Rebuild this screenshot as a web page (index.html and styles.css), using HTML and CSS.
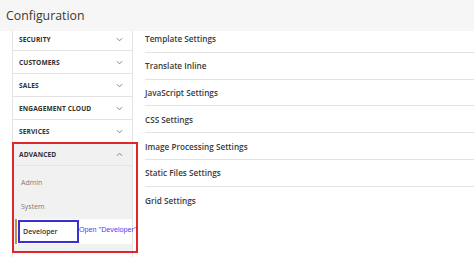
FILE: index.html
```html
<!DOCTYPE html>
<html>
<head>
<meta charset="utf-8">
<link rel="stylesheet" href="styles.css">
</head>
<body>
<header class="page-header"><h1 class="title">Configuration</h1></header>
<div class="main">
  <nav class="sidebar">
    <div class="side-list">
      <div class="side-row"><span>SECURITY</span><svg class="chev" viewBox="0 0 8 5"><path d="M1 1l3 3 3-3" fill="none" stroke="#777" stroke-width="1"/></svg></div>
      <div class="side-row"><span>CUSTOMERS</span><svg class="chev" viewBox="0 0 8 5"><path d="M1 1l3 3 3-3" fill="none" stroke="#777" stroke-width="1"/></svg></div>
      <div class="side-row"><span>SALES</span><svg class="chev" viewBox="0 0 8 5"><path d="M1 1l3 3 3-3" fill="none" stroke="#777" stroke-width="1"/></svg></div>
      <div class="side-row"><span>ENGAGEMENT CLOUD</span><svg class="chev" viewBox="0 0 8 5"><path d="M1 1l3 3 3-3" fill="none" stroke="#777" stroke-width="1"/></svg></div>
      <div class="side-row"><span>SERVICES</span><svg class="chev" viewBox="0 0 8 5"><path d="M1 1l3 3 3-3" fill="none" stroke="#777" stroke-width="1"/></svg></div>
      <div class="group">
        <div class="side-row open"><span>ADVANCED</span><svg class="chev" viewBox="0 0 8 5"><path d="M1 4l3-3 3 3" fill="none" stroke="#777" stroke-width="1"/></svg></div>
        <div class="sub first">Admin</div>
        <div class="sub">System</div>
        <div class="sub active">Developer</div>
      </div>
    </div>
    <div class="note-red"></div>
    <div class="note-blue"></div>
    <div class="note-text">Open "Developer"</div>
  </nav>
  <section class="content">
    <div class="content-list">
      <div class="item">Template Settings</div>
      <div class="item">Translate Inline</div>
      <div class="item">JavaScript Settings</div>
      <div class="item">CSS Settings</div>
      <div class="item">Image Processing Settings</div>
      <div class="item">Static Files Settings</div>
      <div class="item last">Grid Settings</div>
    </div>
  </section>
</div>
</body>
</html>
```
FILE: styles.css
```css
* { box-sizing: border-box; }
html, body { margin: 0; padding: 0; background: #fff; }
body { font-family: "Open Sans", "Liberation Sans", sans-serif; width: 474px; height: 257px; overflow: hidden; }

.page-header { height: 31px; background: #f6f6f6; padding-left: 6px; display: flex; align-items: center; }
.title { margin: 0; font-size: 12.3px; font-weight: 400; color: #41362f; }

.main { display: flex; height: 226px; overflow: hidden; }

.sidebar { position: relative; width: 121px; margin-left: 12px; border-left: 1px solid #e3e3e3; border-right: 1px solid #e3e3e3; }
.side-list { margin-top: -3px; }
.side-row { height: 23px; display: flex; align-items: center; justify-content: space-between; padding: 0 9px 0 6px; border-bottom: 1px solid #e3e3e3; font-size: 6.6px; font-weight: 700; color: #303030; letter-spacing: 0.1px; }
.chev { width: 7px; height: 5px; }
.group { background: #f1f1f1; padding-bottom: 8px; }
.side-row.open { border-bottom: 1px solid #e6e6e6; }
.sub { height: 24.5px; display: flex; align-items: center; padding-left: 8px; font-size: 7px; color: #7b7b7b; }
.sub.first { margin-top: 4px; }
.sub.active { background: #fff; color: #303030; font-weight: 600; border-left: 2px solid #c4904c; margin-left: 2px; padding-left: 6px; height: 25px; }

.note-red { position: absolute; left: -1px; top: 111px; width: 126px; height: 111px; border: 2px solid #e0262a; }
.note-blue { position: absolute; left: 5px; top: 189px; width: 61px; height: 23px; border: 2px solid #3a2fd0; }
.note-text { position: absolute; left: 66px; top: 194px; font-family: "Liberation Sans", Arial, sans-serif; font-size: 7.2px; color: #4a3cf0; white-space: nowrap; }

.content { flex: 1; margin-left: 12px; }
.content-list { margin-top: -5px; }
.item { height: 26.8px; display: flex; align-items: center; border-bottom: 1px solid #e3e3e3; font-size: 8.2px; font-weight: 600; color: #3a3a3a; }
.item.last { border-bottom: none; }
```
